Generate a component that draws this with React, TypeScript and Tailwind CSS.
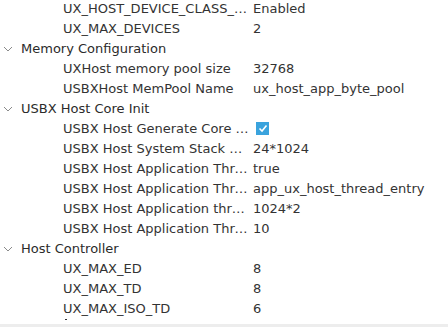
import React from 'react';

type Row =
  | { kind: 'group'; label: string }
  | { kind: 'item'; label: string; value?: string; checked?: boolean };

const ROWS: Row[] = [
  { kind: 'item', label: 'UX_HOST_DEVICE_CLASS_REGISTRATION', value: 'Enabled' },
  { kind: 'item', label: 'UX_MAX_DEVICES', value: '2' },
  { kind: 'group', label: 'Memory Configuration' },
  { kind: 'item', label: 'UXHost memory pool size', value: '32768' },
  { kind: 'item', label: 'USBXHost MemPool Name', value: 'ux_host_app_byte_pool' },
  { kind: 'group', label: 'USBX Host Core Init' },
  { kind: 'item', label: 'USBX Host Generate Core Init Code', checked: true },
  { kind: 'item', label: 'USBX Host System Stack Size', value: '24*1024' },
  { kind: 'item', label: 'USBX Host Application Thread Creation', value: 'true' },
  { kind: 'item', label: 'USBX Host Application Thread Entry', value: 'app_ux_host_thread_entry' },
  { kind: 'item', label: 'USBX Host Application thread stack size', value: '1024*2' },
  { kind: 'item', label: 'USBX Host Application Thread Priority', value: '10' },
  { kind: 'group', label: 'Host Controller' },
  { kind: 'item', label: 'UX_MAX_ED', value: '8' },
  { kind: 'item', label: 'UX_MAX_TD', value: '8' },
  { kind: 'item', label: 'UX_MAX_ISO_TD', value: '6' },
];

const Chevron = () => (
  <svg width="10" height="8" viewBox="0 0 10 8" className="shrink-0">
    <path d="M1 2 L5 6 L9 2" fill="none" stroke="#8a8a8a" strokeWidth="1" />
  </svg>
);

const CheckBox = () => (
  <div className="w-[13px] h-[13px] bg-[#3aa3dd] flex items-center justify-center mt-[-1px] ml-[3px]">
    <svg width="10" height="9" viewBox="0 0 10 9">
      <path d="M1.5 4.5 L4 7 L8.5 1.5" fill="none" stroke="#ffffff" strokeWidth="1.6" />
    </svg>
  </div>
);

export default function App() {
  return (
    <div
      className="w-[448px] h-[327px] bg-white overflow-hidden flex flex-col text-[13px] text-[#333333]"
      style={{ fontFamily: '"DejaVu Sans", sans-serif' }}
    >
      <div className="flex-1 overflow-hidden">
        <div className="-mt-[1px]">
          {ROWS.map((row, i) =>
            row.kind === 'group' ? (
              <div key={i} className="h-5 flex items-center pl-[3px] gap-[8px]">
                <Chevron />
                <span className="whitespace-nowrap text-[#2b2b2b]">{row.label}</span>
              </div>
            ) : (
              <div key={i} className="h-5 flex items-center">
                <div className="w-[190px] ml-[63px] truncate whitespace-nowrap pr-[3px]">{row.label}</div>
                <div className="whitespace-nowrap">{row.checked ? <CheckBox /> : row.value}</div>
              </div>
            )
          )}
          <div className="h-5 flex items-start pl-[65px]">
            <div className="w-[2px] h-[1px] bg-[#333333]" />
          </div>
        </div>
      </div>
      <div className="h-[3px] bg-[#ededed]" />
    </div>
  );
}
